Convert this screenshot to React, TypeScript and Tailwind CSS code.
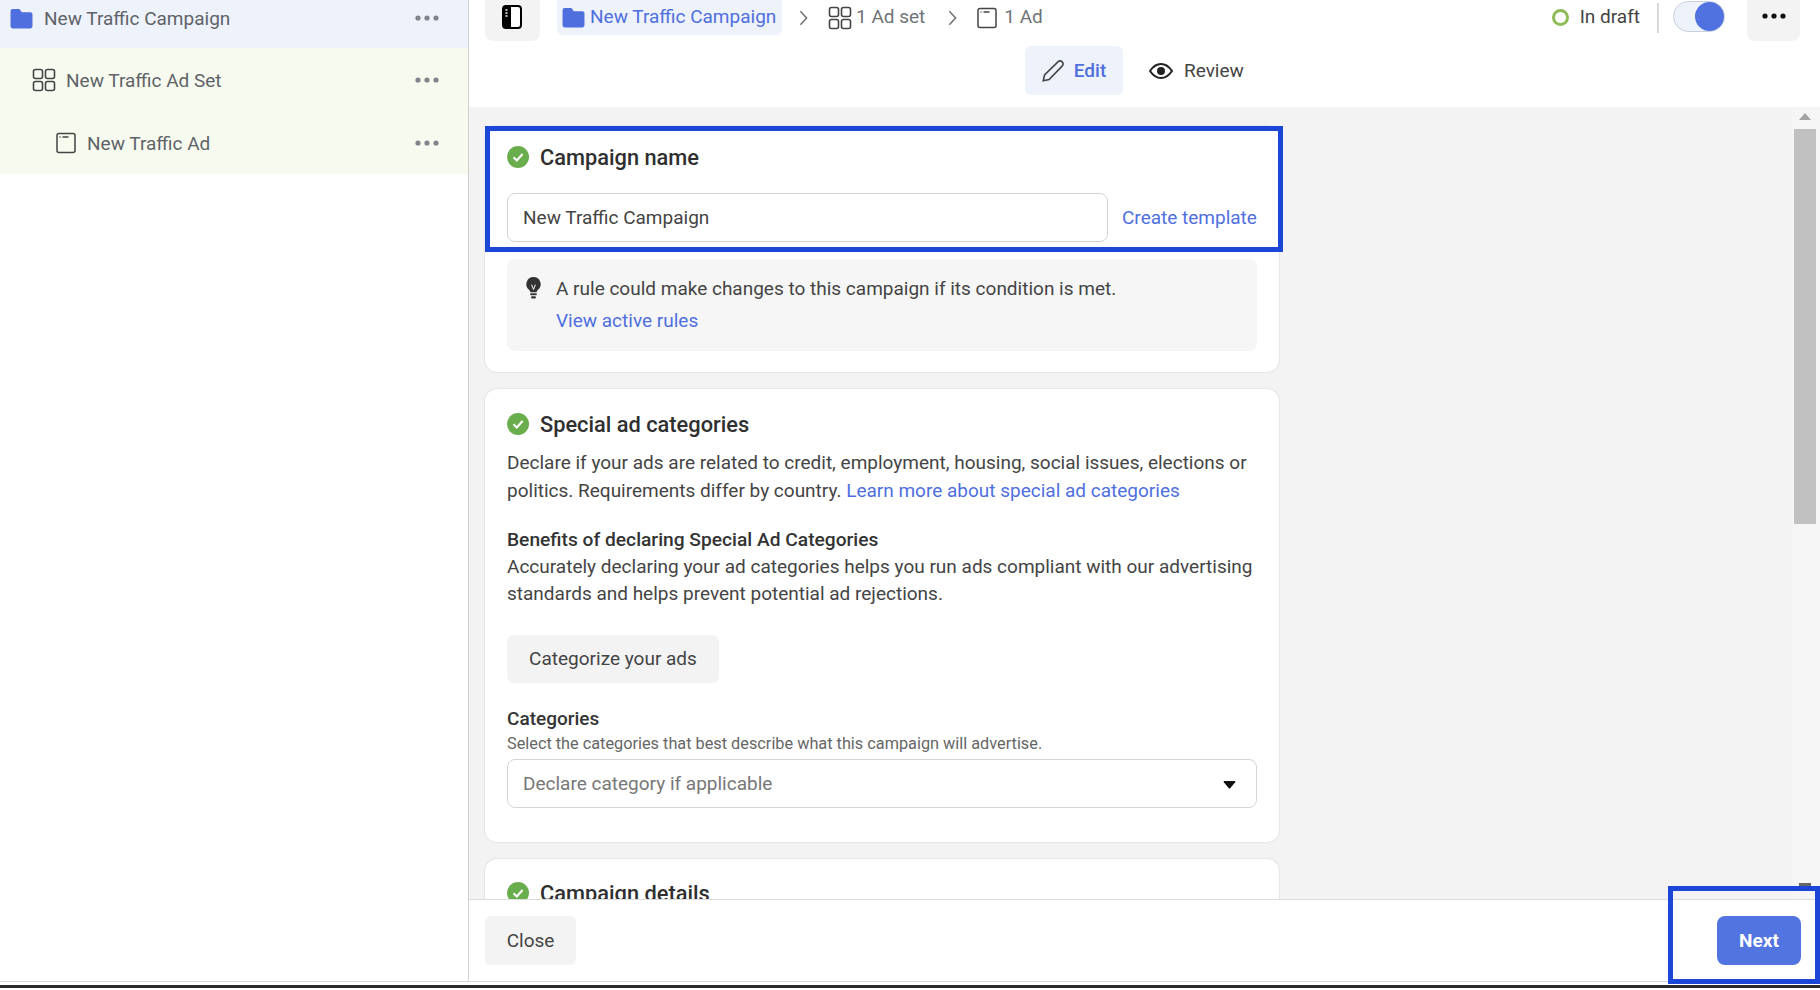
import React from "react";

const Folder = ({ className }: { className?: string }) => (
  <svg viewBox="0 0 22 20" className={className} fill="#4f6fdf">
    <path d="M2.5 1h6a1.5 1.5 0 0 1 1.2.6L11.2 4H19.5A2 2 0 0 1 21.5 6v11.5a2 2 0 0 1-2 2h-17a2 2 0 0 1-2-2V3a2 2 0 0 1 2-2z" />
  </svg>
);

const GridIcon = () => (
  <svg viewBox="0 0 24 24" className="w-[24px] h-[24px] shrink-0" fill="none" stroke="#444" strokeWidth="1.6">
    <rect x="1.5" y="1.5" width="9" height="9" rx="2" />
    <rect x="13.5" y="1.5" width="9" height="9" rx="2" />
    <rect x="1.5" y="13.5" width="9" height="9" rx="2" />
    <rect x="13.5" y="13.5" width="9" height="9" rx="2" />
  </svg>
);

const AdIcon = () => (
  <svg viewBox="0 0 20 22" className="w-[20px] h-[22px] shrink-0" fill="none" stroke="#444" strokeWidth="1.5">
    <rect x="1" y="1.5" width="18" height="19" rx="2" />
    <path d="M3.5 5h1M6.5 5h6" strokeWidth="1.4" />
  </svg>
);

const Dots = ({ color }: { color: string }) => (
  <svg viewBox="0 0 24 6" className="w-[24px] h-[6px]" fill={color}>
    <circle cx="3" cy="3" r="2.6" />
    <circle cx="12" cy="3" r="2.6" />
    <circle cx="21" cy="3" r="2.6" />
  </svg>
);

const Chevron = () => (
  <svg viewBox="0 0 10 18" className="w-[9px] h-[16px]" fill="none" stroke="#6b6b6b" strokeWidth="1.6">
    <path d="M1.5 1.5 8.5 9l-7 7.5" />
  </svg>
);

const Check = () => (
  <svg viewBox="0 0 22 22" className="w-[22px] h-[22px] shrink-0">
    <circle cx="11" cy="11" r="11" fill="#69ad4c" />
    <path d="M6.5 11.3 9.8 14.5 15.6 8" fill="none" stroke="#fff" strokeWidth="2" />
  </svg>
);

const Row = ({ children, label, cls, labelCls }: { children: React.ReactNode; label: string; cls: string; labelCls: string }) => (
  <div className={`flex items-center h-[63px] pr-[29px] ${cls}`}>
    {children}
    <span className={`mt-[4px] flex-1 text-[19px] text-[#5f6368] ${labelCls}`}>{label}</span>
    <Dots color="#80858a" />
  </div>
);

const Card = ({ title, children, cls }: { title: string; children?: React.ReactNode; cls: string }) => (
  <section className={`bg-white rounded-[12px] shadow-[0_0_2px_rgba(0,0,0,0.18)] px-[22px] ${cls}`}>
    <div className="flex items-center gap-[11px] h-[26px]">
      <Check />
      <h2 className="mt-[2px] text-[21.8px] leading-[26px] font-medium text-[#2f2f2f]">{title}</h2>
    </div>
    {children}
  </section>
);

export default function App() {
  return (
    <div
      className="relative w-[1820px] h-[990px] overflow-hidden bg-white flex flex-col"
      style={{ fontFamily: "Roboto, 'Liberation Sans', sans-serif" }}
    >
      <div className="flex h-[982px] border-b border-[#d6d6d6]">
        <aside className="w-[469px] shrink-0 border-r border-[#d0d0d0] bg-white">
          <div className="flex items-center h-[48px] pb-[12px] pl-[10px] pr-[29px] bg-[#eef2fb]">
            <Folder className="w-[23px] h-[21px] shrink-0" />
            <span className="mt-[2px] ml-[11px] flex-1 text-[19px] text-[#5f6368]">New Traffic Campaign</span>
            <Dots color="#80858a" />
          </div>
          <div className="bg-[#f7fbef]">
            <Row label="New Traffic Ad Set" cls="pl-[32px]" labelCls="ml-[10px]">
              <GridIcon />
            </Row>
            <Row label="New Traffic Ad" cls="pl-[56px]" labelCls="ml-[11px]">
              <AdIcon />
            </Row>
          </div>
        </aside>

        <main className="flex-1 min-w-0 flex flex-col">
          <header className="h-[107px] shrink-0 bg-white pl-[16px] pr-[20px]">
            <div className="flex items-start h-[46px]">
              <button className="w-[55px] h-[41px] pb-[8px] rounded-b-[8px] bg-[#f3f3f3] flex items-center justify-center">
                <svg viewBox="0 0 20 24" className="w-[20px] h-[24px] -ml-[1px]">
                  <rect x="1" y="1" width="18" height="22" rx="3" fill="#fff" stroke="#000" strokeWidth="2" />
                  <path d="M3.5 1h5.5v22H3.5A2.5 2.5 0 0 1 1 20.5v-17A2.500 2.500 0 0 1 3.500 1z" fill="#000" />
                  <path d="M3.500 5h2M3.500 8h2M3.500 11h2" stroke="#fff" strokeWidth="1.300" />
                </svg>
              </button>
              <div className="ml-[17px] h-[35px] w-[225px] rounded-b-[6px] bg-[#eef2fb] flex items-center pl-[5px] gap-[5px]">
                <Folder className="w-[23px] h-[21px] shrink-0" />
                <span className="text-[19px] text-[#4f6fdf] whitespace-nowrap">New Traffic Campaign</span>
              </div>
              <div className="h-[35px] flex items-center ml-[17px] text-[19px] text-[#6f7377]">
                <Chevron />
                <span className="ml-[20px]"><GridIcon /></span>
                <span className="ml-[4px] whitespace-nowrap">1 Ad set</span>
                <span className="ml-[23px]"><Chevron /></span>
                <span className="ml-[20px]"><AdIcon /></span>
                <span className="ml-[7px] whitespace-nowrap">1 Ad</span>
              </div>
              <div className="ml-auto h-[35px] flex items-center">
                <span className="w-[17px] h-[17px] rounded-full border-[3px] border-[#8dbb55]" />
                <span className="ml-[11px] text-[19px] text-[#444]">In draft</span>
                <span className="ml-[17px] w-[2px] h-[30px] bg-[#d8d8d8]" />
                <span className="ml-[14px] w-[52px] h-[31px] -mt-[2px] rounded-full bg-[#eef2fb] border border-[#c9cfdf] flex justify-end items-center">
                  <span className="w-[29px] h-[29px] rounded-full bg-[#4f72e0]" />
                </span>
                <button className="ml-[22px] w-[53px] h-[41px] pb-[10px] self-start rounded-b-[8px] bg-[#f3f3f3] flex items-center justify-center">
                  <Dots color="#111" />
                </button>
              </div>
            </div>
            <div className="flex h-[49px] pl-[540px]">
              <button className="w-[98px] h-[49px] pr-[2px] rounded-[6px] bg-[#eef2fb] flex items-center justify-center gap-[8px]">
                <svg viewBox="0 0 24 24" className="w-[26px] h-[26px]" fill="none" stroke="#444" strokeWidth="1.5">
                  <path d="M3 21l1.2-5.400L16.800 3.400a2.400 2.400 0 0 1 3.400 0l.4.4a2.400 2.400 0 0 1 0 3.400L8.400 19.800z" />
                </svg>
                <span className="mt-[2px] text-[19px] font-medium text-[#4f6fdf]">Edit</span>
              </button>
              <div className="ml-[26px] flex items-center">
                <svg viewBox="0 0 24 16" className="w-[24px] h-[16px]" fill="none" stroke="#222" strokeWidth="2">
                  <path d="M1 8c3-4.500 6.800-7 11-7s8 2.500 11 7c-3 4.500-6.800 7-11 7S4 12.500 1 8z" />
                  <circle cx="12" cy="8" r="3" fill="#222" />
                </svg>
                <span className="mt-[2px] ml-[11px] text-[19px] text-[#444]">Review</span>
              </div>
            </div>
          </header>

          <div className="h-[792px] shrink-0 bg-[#f3f3f3] flex overflow-hidden relative">
            <div className="flex-1 pl-[16px] pt-[19px]">
              <div className="w-[794px] flex flex-col gap-[17px]">
                <Card title="Campaign name" cls="h-[246px] pt-[18px]">
                  <div className="mt-[23px] flex items-center">
                    <div className="w-[601px] h-[49px] pt-[2px] rounded-[8px] border border-[#d5d5d5] flex items-center pl-[15px] text-[19px] text-[#444]">
                      New Traffic Campaign
                    </div>
                    <span className="mt-[2px] ml-[14px] text-[19px] text-[#4f6fdf] whitespace-nowrap">Create template</span>
                  </div>
                  <div className="mt-[17px] w-[750px] h-[92px] rounded-[8px] bg-[#f6f6f6] flex pl-[18px] pt-[15px]">
                    <svg viewBox="0 0 16 24" className="w-[17px] h-[23px] shrink-0 mt-[3px]">
                      <path d="M8 0a7.500 7.500 0 0 0-4.500 13.500c.8.7 1.200 1.500 1.200 2.500h6.600c0-1 .4-1.800 1.200-2.500A7.500 7.500 0 0 0 8 0z" fill="#333" />
                      <path d="M6 8l2 5 2-5" fill="none" stroke="#fff" strokeWidth="1" />
                      <rect x="4.700" y="17" width="6.600" height="2" fill="#333" />
                      <rect x="5.500" y="20" width="5" height="2.500" rx="1" fill="#333" />
                    </svg>
                    <div className="ml-[14px]">
                      <p className="text-[19px] leading-[30px] text-[#444]">A rule could make changes to this campaign if its condition is met.</p>
                      <p className="text-[19px] leading-[33px] text-[#4f6fdf]">View active rules</p>
                    </div>
                  </div>
                </Card>

                <Card title="Special ad categories" cls="h-[453px] pt-[22px]">
                  <p className="mt-[12px] text-[19px] leading-[28px] text-[#444]">
                    Declare if your ads are related to credit, employment, housing, social issues, elections or politics. Requirements differ by country.{" "}
                    <span className="text-[#4f6fdf]">Learn more about special ad categories</span>
                  </p>
                  <h3 className="mt-[22px] text-[19.2px] leading-[26px] font-medium text-[#333]">Benefits of declaring Special Ad Categories</h3>
                  <p className="text-[19px] leading-[27px] text-[#444]">
                    Accurately declaring your ad categories helps you run ads compliant with our advertising standards and helps prevent potential ad rejections.
                  </p>
                  <button className="mt-[28px] w-[212px] h-[48px] pt-[1px] rounded-[6px] bg-[#f3f3f3] text-[19px] text-[#444]">Categorize your ads</button>
                  <h3 className="mt-[25px] text-[19px] leading-[22px] font-medium text-[#333]">Categories</h3>
                  <p className="mt-[3px] text-[16.3px] leading-[22px] text-[#666]">Select the categories that best describe what this campaign will advertise.</p>
                  <div className="mt-[4px] h-[49px] pt-[2px] rounded-[8px] border border-[#d5d5d5] flex items-center justify-between pl-[15px] pr-[20px] text-[19px] text-[#777]">
                    Declare category if applicable
                    <svg viewBox="0 0 14 10" className="w-[13px] h-[9px]"><path d="M1.500 1h11a1 1 0 0 1 .8 1.500L8 9a1.300 1.300 0 0 1-2 0L.700 2.500A1 1 0 0 1 1.500 1z" fill="#111" /></svg>
                  </div>
                </Card>

                <Card title="Campaign details" cls="h-[200px] pt-[21px]" />
              </div>
            </div>
            <div className="w-[29px] shrink-0 pr-[2px] bg-[#f5f5f5] flex flex-col items-center pt-[6px]">
              <svg viewBox="0 0 12 7" className="w-[12px] h-[7px]"><path d="M6 0l6 7H0z" fill="#a3a3a3" /></svg>
              <div className="mt-[9px] w-[22px] h-[395px] bg-[#c1c1c1]" />
              <div className="mt-auto mb-[12px] w-[12px] h-[4px] bg-[#666]" />
            </div>
          </div>

          <footer className="flex-1 bg-white border-t border-[#dcdcdc] flex items-center justify-between pl-[16px] pr-[19px]">
            <button className="w-[91px] h-[49px] pt-[2px] rounded-[6px] bg-[#f3f3f3] text-[19px] text-[#444]">Close</button>
            <button className="w-[84px] h-[49px] pt-[2px] rounded-[8px] bg-[#5274e0] text-[19px] font-bold text-white">Next</button>
          </footer>
        </main>
      </div>
      <div className="mt-[3px] h-[3px] bg-[#2b2b2b]" />

      <div className="absolute left-[485px] top-[126px] w-[798px] h-[126px] border-[5px] border-[#1c46d8]" />
      <div className="absolute left-[1668px] top-[886px] w-[152px] h-[98px] border-[5px] border-[#1c46d8]" />
    </div>
  );
}
